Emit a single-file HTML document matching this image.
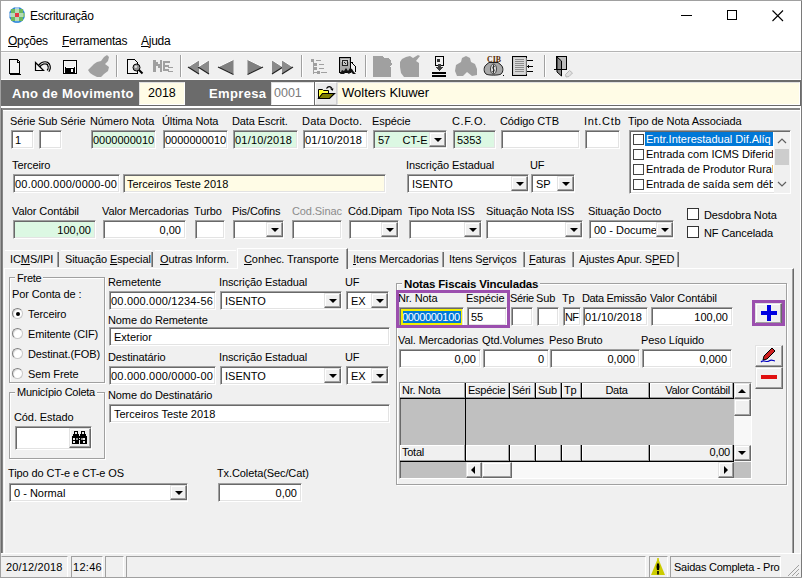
<!DOCTYPE html><html><head><meta charset="utf-8"><style>
*{margin:0;padding:0;box-sizing:border-box}
html,body{width:802px;height:578px;overflow:hidden;background:#f0f0f0;font-family:"Liberation Sans",sans-serif;font-size:11px;color:#000}
.a{position:absolute}
#win{position:absolute;left:0;top:0;width:802px;height:578px;background:#f0f0f0;overflow:hidden}
.mi{position:absolute;top:34px;font-size:12px;letter-spacing:-0.25px}
.bl{position:absolute;color:#fff;font-weight:bold;font-size:13px;top:86px;letter-spacing:0.35px}
.lbl{position:absolute;white-space:nowrap;line-height:13px;letter-spacing:-0.1px}
.in{position:absolute;background:#fff;border-style:solid;border-width:1px;border-color:#a0a0a0 #fff #fff #a0a0a0;box-shadow:inset 1px 1px 0 #696969, inset -1px -1px 0 #e3e3e3;white-space:nowrap;overflow:hidden;padding-left:3px;padding-top:1px;line-height:17px;letter-spacing:0px}
.g{background:#dcf8e3}
.y{background:#fffce6}
.r{text-align:right;padding-right:4px}
.ct{position:absolute;left:4px;top:1px}
.btn{position:absolute;top:1px;right:0px;width:17px;height:15px;background:#f0f0f0;border-style:solid;border-width:1px;border-color:#e3e3e3 #696969 #696969 #e3e3e3;box-shadow:inset -1px -1px 0 #a0a0a0, inset 1px 1px 0 #fff}
.btn:after{content:"";position:absolute;left:4px;top:5px;border-left:4px solid transparent;border-right:4px solid transparent;border-top:4px solid #000}
.rb{position:absolute;border-style:solid;border-width:1px;border-color:#e3e3e3 #696969 #696969 #e3e3e3;box-shadow:inset -1px -1px 0 #a0a0a0, inset 1px 1px 0 #fff;background:#f0f0f0}
.chk{position:absolute;width:12px;height:12px;background:#fff;border:1px solid #333}
.hl{position:absolute;background:#fff}
.dl{position:absolute;background:#a0a0a0}
.tab{position:absolute;top:251px;height:17px;white-space:nowrap;letter-spacing:-0.1px;line-height:13px;padding-top:2px}
.sep{position:absolute;width:2px;border-left:1px solid #a0a0a0;border-right:1px solid #fff}
.grp{position:absolute;border:1px solid #a0a0a0;box-shadow:1px 1px 0 #fff inset, 1px 1px 0 #fff}
.gt{position:absolute;background:#f0f0f0;padding:0 2px;white-space:nowrap;line-height:13px;letter-spacing:-0.25px}
.radio{position:absolute;width:11px;height:11px;border-radius:50%;background:#fff;border:1px solid #c8c8c8;border-top-color:#808080;border-left-color:#808080;box-shadow:inset 1px 1px 0 #e0e0e0}
.hd{position:absolute;background:#f0f0f0;border-right:1px solid #000;border-bottom:1px solid #000;box-shadow:inset -1px -1px 0 #a0a0a0, inset 1px 1px 0 #fff;white-space:nowrap;overflow:hidden;line-height:15px;letter-spacing:-0.25px;padding-left:2px}
</style></head><body><div id="win">
<div class="a" style="left:0;top:0;width:802px;height:52px;background:#fff"></div>
<svg class="a" style="left:9px;top:7px" width="16" height="16" viewBox="0 0 16 16"><defs><clipPath id="cc"><circle cx="8" cy="8" r="8"/></clipPath></defs><g clip-path="url(#cc)" shape-rendering="crispEdges"><rect width="16" height="16" fill="#2f86d6"/><rect x="2" y="2" width="12" height="12" fill="#6db85e"/><rect x="6" y="2" width="4" height="12" fill="#b5dcb5"/><rect x="2" y="6" width="12" height="4" fill="#b5dcb5"/><rect x="6" y="0" width="4" height="2" fill="#a9c9ec"/><rect x="0" y="6" width="2" height="4" fill="#a9c9ec"/><rect x="14" y="6" width="2" height="4" fill="#8fc88a"/><rect x="6" y="14" width="4" height="2" fill="#4e9be0"/><rect x="6" y="6" width="4" height="4" fill="#e23a44"/></g></svg>
<div class="a" style="left:30px;top:9px;font-size:12px;letter-spacing:-0.25px">Escrituração</div>
<div class="a" style="left:681px;top:15px;width:11px;height:1px;background:#000"></div>
<div class="a" style="left:727px;top:10px;width:10px;height:10px;border:1px solid #000"></div>
<svg class="a" style="left:772px;top:10px" width="12" height="12"><path d="M0.5 0.5L11 11M11 0.5L0.5 11" stroke="#000" stroke-width="1.1"/></svg>
<div class="mi" style="left:8px"><u>O</u>pções</div>
<div class="mi" style="left:62px"><u>F</u>erramentas</div>
<div class="mi" style="left:141px"><u>A</u>juda</div>
<div class="a" style="left:0;top:51px;width:802px;height:1px;background:#b4b4b4"></div><div class="a" style="left:0;top:52px;width:802px;height:1px;background:#fafafa"></div>
<div id="tbicons"></div>
<svg class="a" style="left:0;top:0" width="600" height="80" viewBox="0 0 600 80" shape-rendering="crispEdges">
<!-- new doc -->
<path d="M9.5 59.5H17.5L19.5 61.5V73.5H9.5Z" fill="#f4f4f4" stroke="#000" stroke-width="1"/>
<path d="M10 74.5H20.5" stroke="#000"/>
<path d="M17.5 60V62.5H19" stroke="#000" fill="none"/>
<!-- undo -->
<g shape-rendering="geometricPrecision">
<path d="M38.5 67.5C40.5 62.5 46.5 61.5 48.5 64.5C50 67 49 69.5 48 71" stroke="#000" stroke-width="3.2" fill="none"/>
<path d="M38.5 67.5C40.5 62.5 46.5 61.5 48.5 64.5C50 67 49 69.5 48 71" stroke="#f4f4f4" stroke-width="1" fill="none"/>
<path d="M35.5 62.5V70.5H43.5Z" fill="#f4f4f4" stroke="#000" stroke-width="1.2" stroke-linejoin="miter"/>
</g>
<!-- floppy -->
<rect x="63" y="60" width="14" height="14" fill="#000"/>
<rect x="65" y="61" width="10" height="6" fill="#f0f0f0"/>
<rect x="64" y="61" width="1" height="12" fill="#fff"/>
<rect x="75" y="61" width="1" height="12" fill="#fff"/>
<rect x="66" y="67" width="8" height="1" fill="#fff"/>
<rect x="71" y="69" width="2" height="3" fill="#fff"/>
<!-- brush gray -->
<path d="M88 70L94 64L97 62L101 61L104 57L107 55L109 57L108 61L105 64L109 67L108 71L104 74L101 77L97 77L93 75L90 73Z" fill="#a0a0a0" shape-rendering="geometricPrecision"/>
<!-- print preview -->
<path d="M127.5 59.5H134.5L137.5 62.5V73.5H127.5Z" fill="#f4f4f4" stroke="#000"/>
<circle cx="136.5" cy="67.5" r="3.5" fill="#909090" stroke="#000" stroke-width="1" shape-rendering="geometricPrecision"/>
<circle cx="135.8" cy="66.8" r="1.3" fill="#e0e0e0" shape-rendering="geometricPrecision"/>
<path d="M139 70L142.5 73.5" stroke="#000" stroke-width="2" shape-rendering="geometricPrecision"/>
<!-- NFe gray -->
<g fill="#a0a0a0"><rect x="153" y="60" width="3" height="12"/><rect x="156" y="62" width="2" height="4"/><rect x="158" y="64" width="2" height="4"/><rect x="160" y="60" width="2" height="12"/><rect x="163" y="61" width="2" height="10"/><rect x="165" y="61" width="5" height="2"/><rect x="165" y="65" width="4" height="2"/><rect x="168" y="67" width="5" height="1"/><rect x="168" y="69" width="1" height="3"/><rect x="168" y="71" width="5" height="1"/><rect x="165" y="69" width="3" height="2"/></g>
<!-- nav arrows: gray fill, white top edge, black bottom edge -->
<g shape-rendering="geometricPrecision">
<path d="M188 67L199 60V74Z" fill="#8a8a8a"/><path d="M188 67L199 60" stroke="#fff"/><path d="M188 67L199 74" stroke="#202020" stroke-width="1.1"/>
<path d="M198 67L209 60V74Z" fill="#8a8a8a"/><path d="M198 67L209 60" stroke="#fff"/><path d="M198 67L209 74" stroke="#202020" stroke-width="1.1"/>
<path d="M218 67L233.5 59.5V74Z" fill="#808080"/><path d="M218 67L233.5 59.5" stroke="#fff"/><path d="M218 67L233.5 74.5" stroke="#202020" stroke-width="1.1"/>
<path d="M263 67L247.5 59.5V74Z" fill="#808080"/><path d="M263 67L247.5 59.5" stroke="#fff"/><path d="M263 67L247.5 74.5" stroke="#202020" stroke-width="1.1"/>
<path d="M283 67L272 60V74Z" fill="#8a8a8a"/><path d="M283 67L272 60" stroke="#fff"/><path d="M283 67L272 74" stroke="#202020" stroke-width="1.1"/>
<path d="M293 67L282 60V74Z" fill="#8a8a8a"/><path d="M293 67L282 60" stroke="#fff"/><path d="M293 67L282 74" stroke="#202020" stroke-width="1.1"/>
</g>
<!-- tree gray -->
<g fill="#a0a0a0"><rect x="313" y="60" width="1" height="14"/><rect x="311" y="59" width="3" height="3"/><rect x="316" y="60" width="5" height="1"/><rect x="314" y="63" width="3" height="3"/><rect x="319" y="64" width="5" height="1"/><rect x="314" y="67" width="3" height="3"/><rect x="319" y="68" width="5" height="1"/><rect x="317" y="71" width="3" height="3"/><rect x="321" y="72" width="6" height="1"/><rect x="314" y="72" width="3" height="1"/></g>
<!-- dark icon -->
<rect x="339.5" y="57.5" width="11" height="15" fill="#a8a8a8" stroke="#000"/>
<rect x="341" y="59" width="8" height="3" fill="#d0d0d0"/>
<rect x="342.5" y="60.5" width="5" height="5" fill="#c8c8c8" stroke="#222"/>
<path d="M344 62L346 64" stroke="#222"/>
<path d="M340 74L342 70L344 71L346 68L348 71L350 68L352 69L354 72L356 74L353 74L351 72L349 74L346 72L344 74Z" fill="#111" shape-rendering="geometricPrecision"/>
<path d="M351.5 62L355 66V72" stroke="#000" fill="none"/>
<!-- gray doc -->
<path d="M373 56H383L384 58L389 58L391 61L392 64L390 66L391 68V77H373Z" fill="#a0a0a0"/>
<!-- gray bag -->
<path d="M402 59L406 57L410 56L413 58L418 55L420 56L416 61L419 63V77H404L401 73L400 67L400 62Z" fill="#a0a0a0" shape-rendering="geometricPrecision"/>
<!-- download -->
<rect x="435.5" y="56.5" width="8" height="9" fill="#f0f0f0" stroke="#000"/>
<circle cx="438.5" cy="60.5" r="1.5" fill="#333"/>
<path d="M436 67H443L439.5 71Z" fill="#404040"/><rect x="438" y="64" width="3" height="4" fill="#404040"/>
<rect x="432" y="72" width="14" height="1.5" fill="#000"/><rect x="432" y="75" width="14" height="1.5" fill="#000"/>
<!-- gray blob -->
<path d="M466 56L470 58L471 62L475 64L477 69L477 75L472 76L467 72L463 76L457 76L455 71L456 65L461 62L462 58Z" fill="#a0a0a0" shape-rendering="geometricPrecision"/>
<!-- CIB bag -->
<g shape-rendering="geometricPrecision">
<text x="494" y="61.8" font-family="Liberation Serif" font-weight="bold" font-size="8" fill="#5a2a00" text-anchor="middle" textLength="14" lengthAdjust="spacingAndGlyphs">CIB</text>
<path d="M489 62.5H498L501 65C503.5 67 503.5 72 501 74C499 75.5 488 75.5 486 74C483.5 72 483.5 67 486 65Z" fill="#a8a8a8" stroke="#202020" stroke-width="1"/>
<ellipse cx="493.5" cy="69" rx="3" ry="5" fill="#e0e0e0" stroke="#333" stroke-width="0.9"/>
<path d="M495 66.5C493 65.5 492 67.5 493.5 69C495 70.5 494 72.5 492 71.5M493.5 64.5V73.5" stroke="#222" stroke-width="0.9" fill="none"/>
</g>
<rect x="503" y="75" width="1" height="1" fill="#000"/>
<!-- ledger -->
<rect x="512.5" y="56.5" width="14" height="19" fill="#c8c8c8" stroke="#000"/>
<rect x="514" y="58" width="11" height="16" fill="#d8d8d8"/>
<g stroke="#8c8c8c"><path d="M515 59.5H524M515 61.5H524M515 63.5H524M515 65.5H524M515 67.5H524M515 69.5H524M515 71.5H524"/></g>
<rect x="526" y="58" width="1" height="16" fill="#707070"/>
<path d="M527 60.5H533M527 66.5H533M527 71.5H533" stroke="#000"/>
<path d="M527 66.5L529 65V68Z" fill="#000"/>
<!-- exit door -->
<rect x="557" y="57" width="9" height="12" fill="#bdbdbd"/>
<path d="M556.5 69V56.5H566.5V69" stroke="#000" fill="none" stroke-width="1.1"/>
<path d="M557 57L561.5 61V76L557 72Z" fill="#8a8a8a" stroke="#000" stroke-width="1" shape-rendering="geometricPrecision"/>
<path d="M554 69.5H567" stroke="#000"/>
<path d="M565.5 74.5L569.5 70.5L572.5 73L569 76.5L566 77Z" fill="#e0e0e0" stroke="#b8b8b8" shape-rendering="geometricPrecision"/>
</svg>

<div class="a" style="left:116px;top:55px;width:2px;height:22px;border-left:1px solid #a0a0a0;border-right:1px solid #fff"></div>
<div class="a" style="left:180px;top:55px;width:2px;height:22px;border-left:1px solid #a0a0a0;border-right:1px solid #fff"></div>
<div class="a" style="left:301px;top:55px;width:2px;height:22px;border-left:1px solid #a0a0a0;border-right:1px solid #fff"></div>
<div class="a" style="left:365px;top:55px;width:2px;height:22px;border-left:1px solid #a0a0a0;border-right:1px solid #fff"></div>
<div class="a" style="left:544px;top:55px;width:2px;height:22px;border-left:1px solid #a0a0a0;border-right:1px solid #fff"></div>
<div class="a" style="left:0;top:79px;width:802px;height:1px;background:#fff"></div>
<div class="a" style="left:1px;top:80px;width:800px;height:26px;background:#6b6b6b"></div>
<div class="bl" style="left:12px">Ano de Movimento</div>
<div class="a" style="left:139px;top:82px;width:46px;height:23px;background:#fffce6;border:1px solid #e0e0e0;border-right-color:#fff;border-bottom-color:#fff;font-size:12.5px;line-height:20px;padding-left:8px">2018</div>
<div class="bl" style="left:209px">Empresa</div>
<div class="a" style="left:271px;top:82px;width:43px;height:23px;background:#fff;border:1px solid #e0e0e0;border-right-color:#fff;border-bottom-color:#fff;font-size:12.5px;line-height:20px;padding-left:2px;color:#7a7a7a">0001</div>
<div class="a" style="left:315px;top:82px;width:22px;height:23px;background:#ececec;border:1px solid #fff;border-right-color:#d0d0d0;border-bottom-color:#d0d0d0"></div>
<svg class="a" style="left:316px;top:84px" width="20" height="18" viewBox="0 0 20 18"><path d="M2.5 14.5V5.5H6.5L7.5 6.5H12.5V9" fill="#ffff40" stroke="#000" stroke-width="1"/><path d="M4 6.5H6.5V13.5H4Z" fill="#ffff20"/><path d="M2.5 14.5L6.5 9.5H18.5L13.5 14.5Z" fill="#808000" stroke="#000" stroke-width="1.2"/><path d="M10.5 4.5C12 2 14.5 2 16 4.5" stroke="#000" fill="none" stroke-width="1.2"/><path d="M14 4.5H17.5L16.5 7Z" fill="#000"/></svg>
<div class="a" style="left:337px;top:82px;width:463px;height:23px;background:#fffce6;border:1px solid #e0e0e0;border-right-color:#fff;border-bottom-color:#fff;font-size:13px;line-height:20px;padding-left:4px">Wolters Kluwer</div>
<div class="a" style="left:1px;top:106px;width:800px;height:2px;background:#fff"></div>
<div class="a" style="left:0;top:0;width:1px;height:578px;background:#a0a0a0"></div>
<div class="a" style="left:800px;top:106px;width:1px;height:447px;background:#fff"></div>
<div class="a" style="left:801px;top:0;width:1px;height:578px;background:#7a7a7a"></div>
<div class="a" style="left:0;top:0;width:802px;height:1px;background:#a0a0a0"></div>
<div class="a" style="left:1px;top:108px;width:1px;height:445px;background:#6b6b6b"></div>
<div class="a" style="left:2px;top:108px;width:798px;height:2px;background:#858585"></div>
<div class="a" style="left:2px;top:108px;width:1px;height:445px;background:#858585"></div>
<div class="a" style="left:3px;top:110px;width:797px;height:1px;background:#fff"></div>
<div class="lbl" style="left:10px;top:115px;">Série</div>
<div class="lbl" style="left:38px;top:115px;">Sub Série</div>
<div class="lbl" style="left:90px;top:115px;">Número Nota</div>
<div class="lbl" style="left:162px;top:115px;">Última Nota</div>
<div class="lbl" style="left:232px;top:115px;">Data Escrit.</div>
<div class="lbl" style="left:302px;top:115px;letter-spacing:0.2px">Data Docto.</div>
<div class="lbl" style="left:372px;top:115px;">Espécie</div>
<div class="lbl" style="left:452px;top:115px;letter-spacing:0.6px">C.F.O.</div>
<div class="lbl" style="left:500px;top:115px;">Código CTB</div>
<div class="lbl" style="left:584px;top:115px;letter-spacing:0.7px">Int.Ctb</div>
<div class="lbl" style="left:628px;top:115px;">Tipo de Nota Associada</div>
<div class="in " style="left:11px;top:130px;width:23px;height:19px;">1</div>
<div class="in " style="left:39px;top:130px;width:23px;height:19px;"></div>
<div class="in g" style="left:91px;top:130px;width:65px;height:19px;padding-left:1px">0000000010</div>
<div class="in " style="left:163px;top:130px;width:65px;height:19px;padding-left:1px">0000000010</div>
<div class="in g" style="left:233px;top:130px;width:65px;height:19px;padding-left:1px;letter-spacing:0.2px">01/10/2018</div>
<div class="in " style="left:303px;top:130px;width:65px;height:19px;padding-left:1px;letter-spacing:0.2px">01/10/2018</div>
<div class="in g" style="left:373px;top:130px;width:74px;height:19px;"><span class="ct">57&nbsp;&nbsp;&nbsp; CT-E</span><div class="btn"></div></div>
<div class="in g" style="left:453px;top:130px;width:43px;height:19px;">5353</div>
<div class="in " style="left:501px;top:130px;width:79px;height:19px;"></div>
<div class="in " style="left:585px;top:130px;width:35px;height:19px;"></div>
<div class="in" style="left:629px;top:130px;width:162px;height:64px;padding:0"></div>
<div class="chk" style="left:633px;top:134px;width:11px;height:11px;border-color:#444"></div>
<div class="a" style="left:645px;top:132px;width:128px;height:14px;background:#0078d7"></div>
<div class="lbl" style="left:646px;top:132px;width:127px;overflow:hidden;line-height:15px;letter-spacing:0px;color:#fff">Entr.Interestadual Dif.Alíq</div>
<div class="chk" style="left:633px;top:149px;width:11px;height:11px;border-color:#444"></div>
<div class="lbl" style="left:646px;top:147px;width:127px;overflow:hidden;line-height:15px;letter-spacing:0px;">Entrada com ICMS Diferido</div>
<div class="chk" style="left:633px;top:164px;width:11px;height:11px;border-color:#444"></div>
<div class="lbl" style="left:646px;top:162px;width:127px;overflow:hidden;line-height:15px;letter-spacing:0px;">Entrada de Produtor Rural</div>
<div class="chk" style="left:633px;top:179px;width:11px;height:11px;border-color:#444"></div>
<div class="lbl" style="left:646px;top:177px;width:127px;overflow:hidden;line-height:15px;letter-spacing:0px;">Entrada de saída sem débi</div>
<div class="a" style="left:774px;top:132px;width:16px;height:61px;background:#f0f0f0"></div>
<div class="a" style="left:775px;top:149px;width:14px;height:16px;background:#cdcdcd"></div>
<svg class="a" style="left:777px;top:138px" width="10" height="6"><path d="M1 5L5 1L9 5" stroke="#606060" fill="none" stroke-width="1.2"/></svg>
<svg class="a" style="left:777px;top:181px" width="10" height="6"><path d="M1 1L5 5L9 1" stroke="#606060" fill="none" stroke-width="1.2"/></svg>
<div class="lbl" style="left:12px;top:159px;">Terceiro</div>
<div class="in " style="left:13px;top:174px;width:107px;height:19px;padding-left:1px;letter-spacing:0.2px">00.000.000/0000-00</div>
<div class="in y" style="left:123px;top:174px;width:263px;height:19px;">Terceiros Teste 2018</div>
<div class="lbl" style="left:406px;top:159px;">Inscrição Estadual</div>
<div class="lbl" style="left:530px;top:159px;">UF</div>
<div class="in " style="left:407px;top:174px;width:122px;height:19px;"><span class="ct">ISENTO</span><div class="btn"></div></div>
<div class="in " style="left:531px;top:174px;width:44px;height:19px;"><span class="ct">SP</span><div class="btn"></div></div>
<div class="lbl" style="left:12px;top:205px;">Valor Contábil</div>
<div class="lbl" style="left:102px;top:205px;">Valor Mercadorias</div>
<div class="lbl" style="left:194px;top:205px;">Turbo</div>
<div class="lbl" style="left:232px;top:205px;">Pis/Cofins</div>
<div class="lbl" style="left:292px;top:205px;color:#8c8c8c">Cod.Sinac</div>
<div class="lbl" style="left:348px;top:205px;">Cód.Dipam</div>
<div class="lbl" style="left:408px;top:205px;">Tipo Nota ISS</div>
<div class="lbl" style="left:486px;top:205px;">Situação Nota ISS</div>
<div class="lbl" style="left:588px;top:205px;">Situação Docto</div>
<div class="in g r" style="left:13px;top:220px;width:83px;height:19px;">100,00</div>
<div class="in r" style="left:103px;top:220px;width:83px;height:19px;">0,00</div>
<div class="in " style="left:195px;top:220px;width:30px;height:19px;"></div>
<div class="in " style="left:233px;top:220px;width:51px;height:19px;"><span class="ct"></span><div class="btn"></div></div>
<div class="in " style="left:292px;top:220px;width:50px;height:19px;"></div>
<div class="in " style="left:349px;top:220px;width:50px;height:19px;"><span class="ct"></span><div class="btn"></div></div>
<div class="in " style="left:409px;top:220px;width:73px;height:19px;"><span class="ct"></span><div class="btn"></div></div>
<div class="in " style="left:486px;top:220px;width:97px;height:19px;"><span class="ct"></span><div class="btn"></div></div>
<div class="in " style="left:589px;top:220px;width:85px;height:19px;"><span class="ct">00 - Documer</span><div class="btn"></div></div>
<div class="chk" style="left:687px;top:208px;width:12px;height:12px;border-color:#333"></div>
<div class="lbl" style="left:704px;top:209px;">Desdobra Nota</div>
<div class="chk" style="left:687px;top:226px;width:12px;height:12px;border-color:#333"></div>
<div class="lbl" style="left:704px;top:227px;">NF Cancelada</div>
<div class="a" style="left:4px;top:268px;width:790px;height:285px;border-top:1px solid #fff;border-left:1px solid #fff;border-right:1px solid #696969;box-shadow:inset -1px 0 0 #a0a0a0"></div>
<div class="a" style="left:5px;top:250px;width:53px;height:18px;border-top:1px solid #fff"></div>
<div class="tab" style="left:10px">IC<u>M</u>S/IPI</div>
<div class="a" style="left:57px;top:252px;width:2px;height:15px;border-left:1px solid #a0a0a0;border-right:1px solid #696969"></div>
<div class="a" style="left:61px;top:250px;width:91px;height:18px;border-top:1px solid #fff"></div>
<div class="tab" style="left:65px">Situação <u>E</u>special</div>
<div class="a" style="left:151px;top:252px;width:2px;height:15px;border-left:1px solid #a0a0a0;border-right:1px solid #696969"></div>
<div class="a" style="left:155px;top:250px;width:81px;height:18px;border-top:1px solid #fff"></div>
<div class="tab" style="left:160px"><u>O</u>utras Inform.</div>
<div class="a" style="left:237px;top:248px;width:111px;height:21px;background:#f0f0f0;border-top:1px solid #fff;border-left:1px solid #fff;border-right:1px solid #696969;box-shadow:inset -1px 0 0 #a0a0a0"></div>
<div class="tab" style="left:244px;top:251px"><u>C</u>onhec. Transporte</div>
<div class="a" style="left:348px;top:250px;width:95px;height:18px;border-top:1px solid #fff"></div>
<div class="tab" style="left:353px"><u>I</u>tens Mercadorias</div>
<div class="a" style="left:442px;top:252px;width:2px;height:15px;border-left:1px solid #a0a0a0;border-right:1px solid #696969"></div>
<div class="a" style="left:444px;top:250px;width:80px;height:18px;border-top:1px solid #fff"></div>
<div class="tab" style="left:449px">Itens S<u>e</u>rviços</div>
<div class="a" style="left:523px;top:252px;width:2px;height:15px;border-left:1px solid #a0a0a0;border-right:1px solid #696969"></div>
<div class="a" style="left:525px;top:250px;width:48px;height:18px;border-top:1px solid #fff"></div>
<div class="tab" style="left:529px"><u>F</u>aturas</div>
<div class="a" style="left:572px;top:252px;width:2px;height:15px;border-left:1px solid #a0a0a0;border-right:1px solid #696969"></div>
<div class="a" style="left:574px;top:250px;width:104px;height:18px;border-top:1px solid #fff"></div>
<div class="tab" style="left:579px">Ajustes Apur. S<u>P</u>ED</div>
<div class="a" style="left:677px;top:252px;width:2px;height:15px;border-left:1px solid #a0a0a0;border-right:1px solid #696969"></div>
<div class="grp" style="left:9px;top:277px;width:96px;height:106px"></div>
<div class="gt" style="left:15px;top:272px">Frete</div>
<div class="lbl" style="left:12px;top:288px;">Por Conta de :</div>
<div class="radio" style="left:12px;top:308px"></div>
<div class="a" style="left:16px;top:312px;width:4px;height:4px;border-radius:50%;background:#000"></div>
<div class="lbl" style="left:28px;top:308px;">Terceiro</div>
<div class="radio" style="left:12px;top:328px"></div>
<div class="lbl" style="left:28px;top:328px;">Emitente (CIF)</div>
<div class="radio" style="left:12px;top:348px"></div>
<div class="lbl" style="left:28px;top:348px;">Destinat.(FOB)</div>
<div class="radio" style="left:12px;top:368px"></div>
<div class="lbl" style="left:28px;top:368px;">Sem Frete</div>
<div class="lbl" style="left:108px;top:276px;">Remetente</div>
<div class="lbl" style="left:219px;top:276px;">Inscrição Estadual</div>
<div class="lbl" style="left:345px;top:276px;">UF</div>
<div class="in " style="left:109px;top:291px;width:107px;height:19px;padding-left:1px;letter-spacing:0.2px">00.000.000/1234-56</div>
<div class="in " style="left:220px;top:291px;width:122px;height:19px;"><span class="ct">ISENTO</span><div class="btn"></div></div>
<div class="in " style="left:346px;top:291px;width:43px;height:19px;"><span class="ct">EX</span><div class="btn"></div></div>
<div class="lbl" style="left:108px;top:314px;">Nome do Remetente</div>
<div class="in " style="left:109px;top:327px;width:281px;height:19px;padding-left:4px">Exterior</div>
<div class="lbl" style="left:108px;top:351px;">Destinatário</div>
<div class="lbl" style="left:219px;top:351px;">Inscrição Estadual</div>
<div class="lbl" style="left:345px;top:351px;">UF</div>
<div class="in " style="left:109px;top:366px;width:107px;height:19px;padding-left:1px;letter-spacing:0.2px">00.000.000/0000-00</div>
<div class="in " style="left:220px;top:366px;width:122px;height:19px;"><span class="ct">ISENTO</span><div class="btn"></div></div>
<div class="in " style="left:346px;top:366px;width:43px;height:19px;"><span class="ct">EX</span><div class="btn"></div></div>
<div class="lbl" style="left:108px;top:389px;">Nome do Destinatário</div>
<div class="in " style="left:109px;top:404px;width:281px;height:19px;padding-left:4px">Terceiros Teste 2018</div>
<div class="grp" style="left:9px;top:392px;width:96px;height:67px"></div>
<div class="gt" style="left:15px;top:386px">Município Coleta</div>
<div class="lbl" style="left:14px;top:411px;">Cód. Estado</div>
<div class="in " style="left:15px;top:426px;width:77px;height:24px;"></div>
<div class="rb" style="left:69px;top:428px;width:22px;height:20px"></div>
<svg class="a" style="left:71px;top:430px" width="18" height="16" viewBox="0 0 18 16" shape-rendering="crispEdges"><g fill="#000"><rect x="3" y="1" width="4" height="4"/><rect x="10" y="1" width="4" height="4"/><rect x="2" y="4" width="6" height="3"/><rect x="9" y="4" width="6" height="3"/><rect x="1" y="6" width="7" height="8"/><rect x="9" y="6" width="7" height="8"/><rect x="7" y="6" width="3" height="4"/></g><g fill="#e8e8e8"><rect x="4" y="2" width="2" height="2"/><rect x="11" y="2" width="2" height="2"/><rect x="2" y="8" width="2" height="2"/><rect x="2" y="11" width="2" height="2"/><rect x="12" y="8" width="2" height="2"/><rect x="12" y="11" width="2" height="2"/><rect x="8" y="8" width="1" height="1"/></g><g fill="#909090"><rect x="5" y="8" width="2" height="2"/><rect x="10" y="8" width="2" height="2"/></g></svg>
<div class="lbl" style="left:8px;top:467px;">Tipo do CT-e e CT-e OS</div>
<div class="in " style="left:9px;top:483px;width:179px;height:19px;"><span class="ct">0 - Normal</span><div class="btn"></div></div>
<div class="lbl" style="left:217px;top:467px;">Tx.Coleta(Sec/Cat)</div>
<div class="in r" style="left:218px;top:483px;width:84px;height:19px;">0,00</div>
<div class="grp" style="left:396px;top:283px;width:391px;height:202px"></div>
<div class="gt" style="left:402px;top:278px;font-weight:bold;font-size:11.5px;letter-spacing:-0.15px">Notas Fiscais Vinculadas</div>
<div class="lbl" style="left:398px;top:292px;">Nr. Nota</div>
<div class="lbl" style="left:466px;top:292px;">Espécie</div>
<div class="lbl" style="left:510px;top:292px;letter-spacing:-0.4px">Série</div>
<div class="lbl" style="left:536px;top:292px;">Sub</div>
<div class="lbl" style="left:562px;top:292px;">Tp</div>
<div class="lbl" style="left:582px;top:292px;letter-spacing:-0.35px">Data Emissão</div>
<div class="lbl" style="left:650px;top:292px;">Valor Contábil</div>
<div class="in " style="left:399px;top:307px;width:65px;height:19px;"></div>
<div class="a" style="left:401px;top:309px;width:61px;height:16px;background:#0078d7;border:2px solid #f0f000;border-right-width:1px"></div>
<div class="lbl" style="left:403px;top:311px;width:58px;height:12px;overflow:hidden;color:#fff;line-height:12px;letter-spacing:-0.35px;text-indent:-1px">0000000100</div>
<div class="in " style="left:467px;top:307px;width:40px;height:19px;">55</div>
<div class="in " style="left:511px;top:307px;width:22px;height:19px;"></div>
<div class="in " style="left:537px;top:307px;width:22px;height:19px;"></div>
<div class="in " style="left:563px;top:307px;width:18px;height:19px;padding-left:1px;letter-spacing:-0.6px">NF</div>
<div class="in " style="left:583px;top:307px;width:65px;height:19px;padding-left:1px;letter-spacing:0.2px">01/10/2018</div>
<div class="in r" style="left:651px;top:307px;width:82px;height:19px;">100,00</div>
<div class="a" style="left:396px;top:290px;width:114px;height:38px;border:3px solid #9b4fae"></div>
<div class="rb" style="left:755px;top:303px;width:27px;height:21px"></div>
<div class="a" style="left:752px;top:300px;width:33px;height:26px;border:3px solid #9b4fae"></div>
<div class="a" style="left:761px;top:311px;width:16px;height:4px;background:#0000e0"></div>
<div class="a" style="left:767px;top:305px;width:4px;height:16px;background:#0000e0"></div>
<div class="lbl" style="left:398px;top:334px;">Val. Mercadorias</div>
<div class="lbl" style="left:482px;top:334px;">Qtd.Volumes</div>
<div class="lbl" style="left:549px;top:334px;">Peso Bruto</div>
<div class="lbl" style="left:641px;top:334px;">Peso Líquido</div>
<div class="in r" style="left:399px;top:349px;width:82px;height:19px;">0,00</div>
<div class="in r" style="left:483px;top:349px;width:66px;height:19px;">0</div>
<div class="in r" style="left:550px;top:349px;width:90px;height:19px;">0,000</div>
<div class="in r" style="left:642px;top:349px;width:90px;height:19px;">0,000</div>
<div class="rb" style="left:755px;top:345px;width:28px;height:22px"></div>
<svg class="a" style="left:760px;top:347px" width="18" height="17" viewBox="0 0 18 17"><path d="M12 1l3 3-8 8-4 1 1-4z" fill="#d02020" stroke="#000" stroke-width="1"/><path d="M1 15c3-3 5 1 8-1s4 0 6 0" stroke="#0000c0" fill="none" stroke-width="1.2"/></svg>
<div class="rb" style="left:755px;top:367px;width:28px;height:22px"></div>
<div class="a" style="left:761px;top:375px;width:16px;height:4px;background:#e01010"></div>
<div class="a" style="left:399px;top:382px;width:353px;height:97px;border:1px solid #a0a0a0;border-right-color:#fff;border-bottom-color:#fff;box-shadow:inset 1px 1px 0 #696969;background:#c0c0c0"></div>
<div class="hd" style="left:400px;top:383px;width:66px;height:16px;">Nr. Nota</div>
<div class="hd" style="left:466px;top:383px;width:44px;height:16px;">Espécie</div>
<div class="hd" style="left:466px;top:445px;width:44px;height:17px;"></div>
<div class="hd" style="left:510px;top:383px;width:26px;height:16px;">Séri</div>
<div class="hd" style="left:510px;top:445px;width:26px;height:17px;"></div>
<div class="hd" style="left:536px;top:383px;width:26px;height:16px;">Sub</div>
<div class="hd" style="left:536px;top:445px;width:26px;height:17px;"></div>
<div class="hd" style="left:562px;top:383px;width:20px;height:16px;">Tp</div>
<div class="hd" style="left:562px;top:445px;width:20px;height:17px;"></div>
<div class="hd" style="left:582px;top:383px;width:68px;height:16px;text-align:center">Data</div>
<div class="hd" style="left:582px;top:445px;width:68px;height:17px;text-align:center"></div>
<div class="hd" style="left:650px;top:383px;width:84px;height:16px;text-align:right;padding-right:3px">Valor Contábil</div>
<div class="hd" style="left:650px;top:445px;width:84px;height:17px;text-align:right;padding-right:3px">0,00</div>
<div class="hd" style="left:400px;top:445px;width:66px;height:17px">Total</div>
<div class="a" style="left:465px;top:399px;width:1px;height:46px;background:#000"></div>
<div class="a" style="left:734px;top:383px;width:17px;height:79px;background:#f8f8f8"></div>
<div class="rb" style="left:734px;top:383px;width:17px;height:16px"></div>
<div class="a" style="left:738px;top:389px;border-left:4px solid transparent;border-right:4px solid transparent;border-bottom:4px solid #000"></div>
<div class="rb" style="left:734px;top:399px;width:17px;height:17px"></div>
<div class="rb" style="left:734px;top:445px;width:17px;height:16px"></div>
<div class="a" style="left:738px;top:451px;border-left:4px solid transparent;border-right:4px solid transparent;border-top:4px solid #000"></div>
<div class="a" style="left:466px;top:462px;width:268px;height:16px;background:#f8f8f8"></div>
<div class="rb" style="left:466px;top:462px;width:16px;height:16px"></div>
<div class="a" style="left:471px;top:466px;border-top:4px solid transparent;border-bottom:4px solid transparent;border-right:4px solid #000"></div>
<div class="rb" style="left:482px;top:462px;width:30px;height:16px"></div>
<div class="rb" style="left:718px;top:462px;width:16px;height:16px"></div>
<div class="a" style="left:724px;top:466px;border-top:4px solid transparent;border-bottom:4px solid transparent;border-left:4px solid #000"></div>
<div class="a" style="left:1px;top:553px;width:800px;height:25px;background:#f0f0f0;border-top:1px solid #fff"></div>
<div class="a" style="left:1px;top:556px;width:67px;height:21px;border-top:1px solid #a0a0a0;border-left:1px solid #f0f0f0;border-right:1px solid #fff;white-space:nowrap;overflow:hidden;line-height:20px;padding-left:4px;letter-spacing:0.15px">20/12/2018</div>
<div class="a" style="left:71px;top:556px;width:32px;height:21px;border-top:1px solid #a0a0a0;border-left:1px solid #a0a0a0;border-right:1px solid #fff;white-space:nowrap;overflow:hidden;line-height:20px;padding-left:1px;letter-spacing:0.3px">12:46</div>
<div class="a" style="left:105px;top:556px;width:19px;height:21px;border-top:1px solid #a0a0a0;border-left:1px solid #a0a0a0;border-right:1px solid #fff;white-space:nowrap;overflow:hidden;line-height:20px;padding-left:4px;letter-spacing:0px"></div>
<div class="a" style="left:126px;top:556px;width:520px;height:21px;border-top:1px solid #a0a0a0;border-left:1px solid #a0a0a0;border-right:1px solid #fff;white-space:nowrap;overflow:hidden;line-height:20px;padding-left:4px;letter-spacing:0px"></div>
<div class="a" style="left:649px;top:556px;width:19px;height:21px;border-top:1px solid #a0a0a0;border-left:1px solid #a0a0a0;border-right:1px solid #fff;white-space:nowrap;overflow:hidden;line-height:20px;padding-left:4px;letter-spacing:0px"></div>
<div class="a" style="left:670px;top:556px;width:111px;height:21px;border-top:1px solid #a0a0a0;border-left:1px solid #a0a0a0;border-right:1px solid #fff;white-space:nowrap;overflow:hidden;line-height:20px;padding-left:3px;letter-spacing:-0.25px">Saidas Completa - Pros</div>
<div class="a" style="left:0;top:577px;width:802px;height:1px;background:#a0a0a0"></div>
<svg class="a" style="left:650px;top:557px" width="16" height="19" viewBox="0 0 16 19"><path d="M8 1L15 18H1Z" fill="#cccc00"/><path d="M8 1V5" stroke="#cccc00" stroke-width="1.5"/><path d="M7 6.5H9L9.5 10L9 13H7L6.5 10Z" fill="#000"/><rect x="7.2" y="14" width="1.6" height="3.5" fill="#000"/></svg>
<svg class="a" style="left:787px;top:564px" width="13" height="13"><path d="M12 1L1 12M12 5L5 12M12 9L9 12" stroke="#a0a0a0" stroke-width="1"/></svg>
</div></body></html>
